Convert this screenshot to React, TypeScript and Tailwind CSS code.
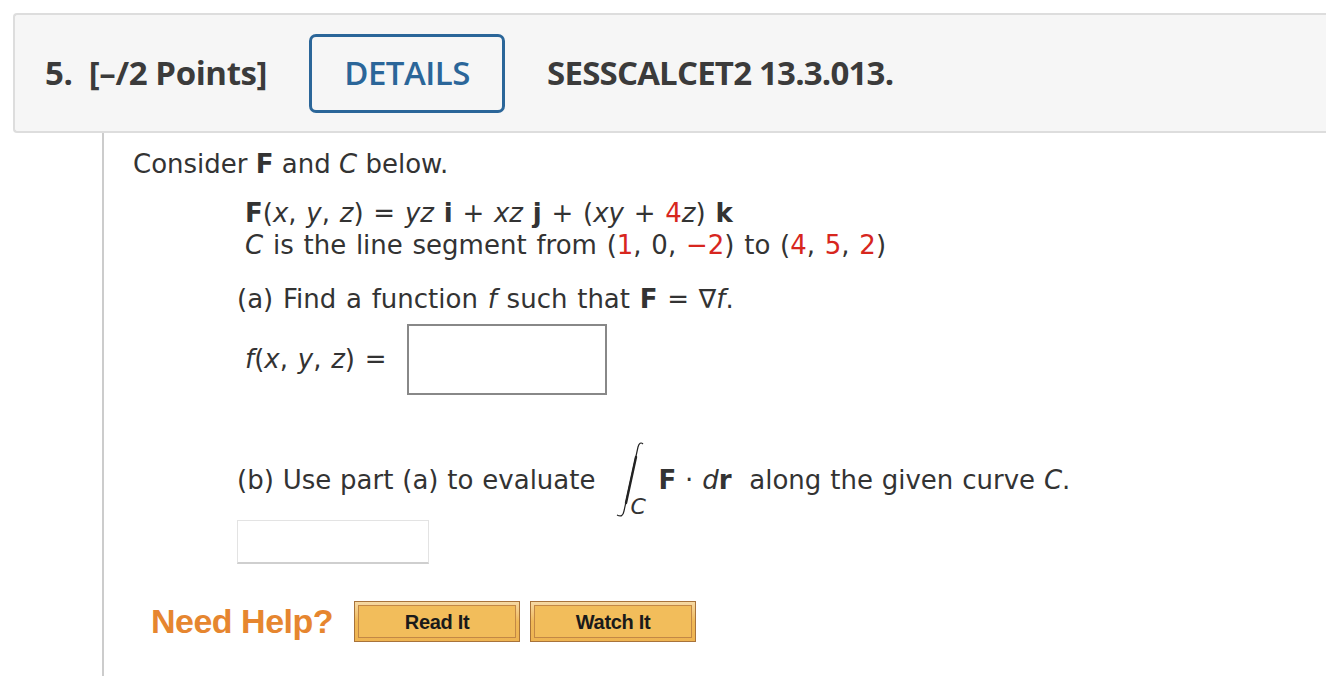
import React from "react";

const red = "text-[#d7261e]";

function HelpButton({ label }: { label: string }) {
  return (
    <div className="w-[166px] h-[41px] bg-[#f0b957] border border-[#a8733a] p-[3px] bg-gradient-to-b from-[#f6d9a3] via-[#f0b957] to-[#eeb452]">
      <div className="w-full h-full border border-[#c38845] bg-[#f2bd5b] flex items-center justify-center text-[20px] font-bold text-[#1a1a1a] tracking-[-0.3px]">
        {label}
      </div>
    </div>
  );
}

export default function App() {
  return (
    <div className="w-[1326px] h-[676px] bg-white overflow-hidden relative" style={{ fontFamily: '"DejaVu Sans", Verdana, sans-serif' }}>
      <div className="pt-[13px] pl-[13px]">
        <div className="h-[120px] bg-[#f6f6f6] border-2 border-r-0 border-[#dddddd] rounded-l-[4px] flex items-center pl-[30px]" style={{ fontFamily: '"Open Sans", sans-serif' }}>
          <span className="text-[33px] font-bold text-[#3b3b3b] tracking-[-0.4px] whitespace-pre">5.  [–/2 Points]</span>
          <div className="ml-[42px] w-[196px] h-[79px] border-[3px] border-[#2b6699] rounded-[7px] flex items-center justify-center">
            <span className="text-[33px] font-semibold text-[#2b6699] tracking-[-0.5px]">DETAILS</span>
          </div>
          <span className="ml-[42px] text-[33px] font-bold text-[#3b3b3b] tracking-[-0.8px]">SESSCALCET2 13.3.013.</span>
        </div>
      </div>
      <div className="ml-[102px] border-l-2 border-[#cccccc] h-[544px] pl-[29px] pt-[16px] text-[#333333] text-[26px]">
        <div className="leading-[30px]">Consider <b>F</b> and <i>C</i> below.</div>
        <div className="pl-[112px] mt-[18px] leading-[32px] [word-spacing:1.5px]">
          <div><b>F</b>(<i>x</i>, <i>y</i>, <i>z</i>) = <i>yz</i> <b>i</b> + <i>xz</i> <b>j</b> + (<i>xy</i> + <span className={red}>4</span><i>z</i>) <b>k</b></div>
          <div><i>C</i> is the line segment from (<span className={red}>1</span>, 0, <span className={red}>−2</span>) to (<span className={red}>4</span>, <span className={red}>5</span>, <span className={red}>2</span>)</div>
        </div>
        <div className="pl-[104px] mt-[23px]">
          <div className="leading-[30px] [word-spacing:1.5px]">(a) Find a function <i>f</i> such that <b>F</b> = ∇<i>f</i>.</div>
          <div className="flex items-center mt-[10px] pl-[8px] [word-spacing:1.5px]">
            <span><i>f</i>(<i>x</i>, <i>y</i>, <i>z</i>) =</span>
            <div className="ml-[20px] w-[200px] h-[71px] border-2 border-[#888888] bg-white" />
          </div>
          <div className="flex items-center mt-[45px] h-[80px] [word-spacing:0.6px]">
            <span>(b) Use part (a) to evaluate</span>
            <span className="relative ml-[17px] w-[46px] h-[78px] inline-block">
              <svg width="34" height="78" viewBox="0 0 34 78" className="absolute left-0 top-0">
                <path d="M31 3 C 29 1, 27 2, 26 6 L 12 70 C 11 75, 9 76, 5 74" fill="none" stroke="#222" strokeWidth="1.2" />
                <path d="M24 16 L 14 62" fill="none" stroke="#222" strokeWidth="2.4" strokeLinecap="round" />
              </svg>
              <i className="absolute left-[18px] top-[55px] text-[22px] leading-none">C</i>
            </span>
            <span><b>F</b> · <i>d</i><b>r</b>&nbsp; along the given curve <i>C</i>.</span>
          </div>
          <div className="mt-[0px] w-[192px] h-[44px] border border-[#e3e3e3] border-b-2 border-b-[#cfcfcf] bg-white" />
        </div>
        <div className="flex items-center mt-[32px] pl-[18px]" style={{ fontFamily: '"Liberation Sans", Arial, sans-serif' }}>
          <span className="text-[34px] font-bold text-[#e6862f] tracking-[-0.5px]">Need Help?</span>
          <div className="ml-[21px]"><HelpButton label="Read It" /></div>
          <div className="ml-[10px]"><HelpButton label="Watch It" /></div>
        </div>
      </div>
    </div>
  );
}
